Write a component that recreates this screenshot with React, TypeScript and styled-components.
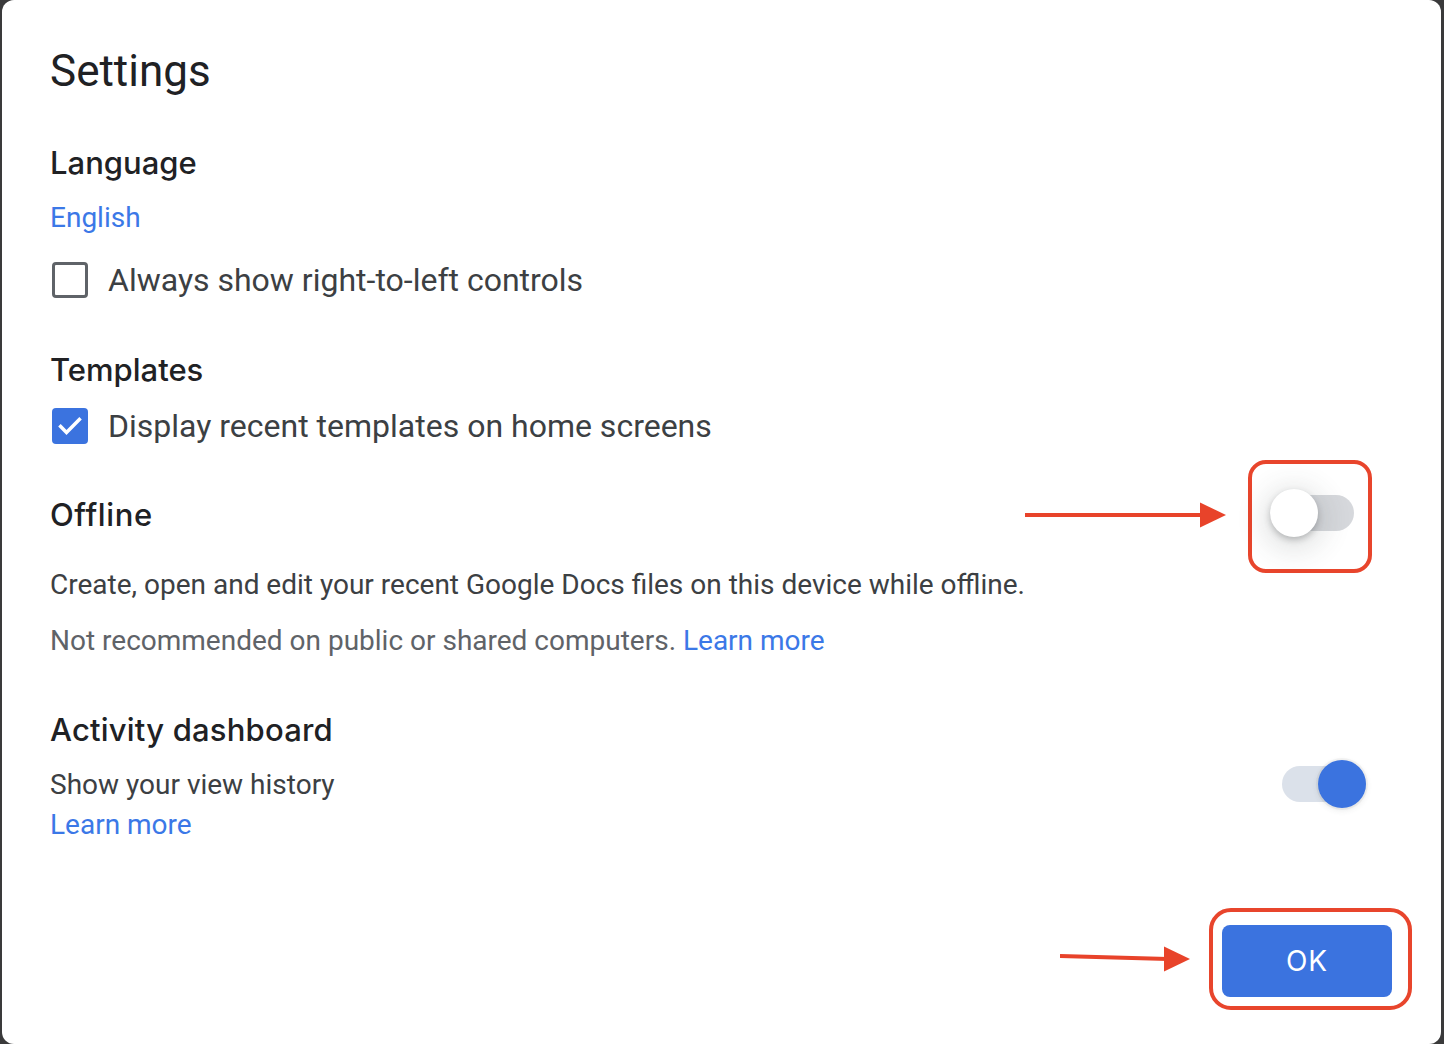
import React from "react";
import styled, { createGlobalStyle } from "styled-components";

const Global = createGlobalStyle`
  html, body { margin: 0; padding: 0; background: #3a3a3b; }
  body { font-family: Roboto, "Noto Sans", sans-serif; }
  * { box-sizing: border-box; }
`;

const Dialog = styled.div`
  margin: 0 3px 0 2px;
  height: 1044px;
  background: #ffffff;
  border-radius: 12px;
  padding: 45px 0 34px 48px;
  display: flex;
  flex-direction: column;
  overflow: hidden;
`;

const Title = styled.h1`
  margin: 0;
  font-family: Roboto, sans-serif;
  font-weight: 400;
  font-size: 44px;
  line-height: 52px;
  color: #202124;
`;

const Heading = styled.h2<{ $mt: number }>`
  margin: ${(p) => p.$mt}px 0 0;
  font-family: Inter, Roboto, sans-serif;
  font-weight: 500;
  font-size: 31px;
  line-height: 40px;
  color: #202124;
  letter-spacing: 0px;
`;

const Link = styled.a`
  color: #3b78e7;
  text-decoration: none;
  cursor: pointer;
`;

const LangLink = styled(Link)<{ $mt: number }>`
  display: block;
  margin-top: ${(p) => p.$mt}px;
  font-size: 28px;
  line-height: 36px;
`;

const CheckRow = styled.label<{ $mt: number }>`
  display: flex;
  align-items: center;
  gap: 20px;
  margin-top: ${(p) => p.$mt}px;
  height: 40px;
  padding-left: 2px;
  font-size: 32px;
  color: #3c4043;
  cursor: pointer;
`;

const Box = styled.span<{ $checked?: boolean }>`
  width: 36px;
  height: 36px;
  border-radius: 4px;
  flex: none;
  display: flex;
  align-items: center;
  justify-content: center;
  border: ${(p) => (p.$checked ? "none" : "3.5px solid #5f6368")};
  background: ${(p) => (p.$checked ? "#3b73df" : "transparent")};
`;

const HeaderRow = styled.div<{ $mt: number; $pr: number }>`
  display: flex;
  align-items: center;
  height: 50px;
  margin-top: ${(p) => p.$mt}px;
  padding-right: ${(p) => p.$pr}px;
`;

const HeaderText = styled.h2`
  flex: 1;
  margin: 0;
  font-family: Inter, Roboto, sans-serif;
  font-weight: 500;
  font-size: 31px;
  line-height: 40px;
  color: #202124;
  letter-spacing: 0.6px;
`;

const Highlight = styled.div<{ $pad: string; $radius: number; $my: string }>`
  border: 4px solid #e8452c;
  border-radius: ${(p) => p.$radius}px;
  padding: ${(p) => p.$pad};
  margin: ${(p) => p.$my};
  display: flex;
  background: transparent;
`;

const ArrowWrap = styled.div<{ $gap: number }>`
  display: flex;
  margin-right: ${(p) => p.$gap}px;
`;

const Para = styled.p<{ $mt: number; $muted?: boolean }>`
  margin: ${(p) => p.$mt}px 0 0;
  font-size: 28px;
  line-height: 36px;
  color: ${(p) => (p.$muted ? "#5f6368" : "#3c4043")};
`;

const ActivityHeading = styled(Heading)`
  letter-spacing: 0.2px;
`;

const ActivityGrid = styled.div`
  display: grid;
  grid-template-columns: 1fr auto;
  margin-top: 15px;
  padding-right: 75px;
  align-items: center;
`;

const GridText = styled.div`
  font-size: 28px;
  line-height: 40px;
  color: #3c4043;
`;

const GridLink = styled(Link)`
  font-size: 28px;
  line-height: 40px;
`;

const Track = styled.div<{ $on?: boolean }>`
  position: relative;
  width: 84px;
  height: 48px;
  flex: none;
  margin: ${(p) => (p.$on ? "-5px 0 -3px" : "0")};
  &::before {
    content: "";
    position: absolute;
    left: 0;
    right: 0;
    top: 6px;
    height: 36px;
    border-radius: 18px;
    background: ${(p) => (p.$on ? "#dbe1ea" : "#d6d8dc")};
  }
`;

const Knob = styled.div<{ $on?: boolean }>`
  position: absolute;
  top: 0;
  ${(p) => (p.$on ? "right: 0;" : "left: 0;")}
  width: 48px;
  height: 48px;
  border-radius: 50%;
  background: ${(p) => (p.$on ? "#3b73df" : "#ffffff")};
  box-shadow: ${(p) =>
    p.$on
      ? "0 0 0 2px rgba(60,64,67,0.06), 0 2px 6px rgba(60,64,67,0.12)"
      : "0 3px 6px rgba(60,64,67,0.3), 0 6px 26px 10px rgba(60,64,67,0.12)"};
`;

const Footer = styled.div`
  margin-top: auto;
  display: flex;
  justify-content: flex-end;
  align-items: center;
  padding-right: 29px;
`;

const OkButton = styled.button`
  width: 170px;
  height: 72px;
  border: none;
  border-radius: 8px;
  background: #3b73df;
  color: #ffffff;
  font-family: Inter, Roboto, sans-serif;
  font-weight: 400;
  font-size: 28px;
  letter-spacing: 0.8px;
  cursor: pointer;
`;

const Check = () => (
  <svg width="28" height="28" viewBox="0 0 24 24">
    <path d="M4 12.5l5 5L20 6.5" fill="none" stroke="#fff" strokeWidth="3" strokeLinecap="square" />
  </svg>
);

const Arrow = ({ w, slope = 0 }: { w: number; slope?: number }) => (
  <svg width={w} height={28} viewBox={`0 0 ${w} 28`}>
    <line x1="0" y1={14 - slope} x2={w - 22} y2={14} stroke="#e8432a" strokeWidth="4" />
    <polygon points={`${w - 26},1.5 ${w},14 ${w - 26},26.5`} fill="#e8432a" />
  </svg>
);

export default function App() {
  return (
    <>
      <Global />
      <Dialog>
        <Title>Settings</Title>

        <Heading $mt={46}>Language</Heading>
        <LangLink $mt={17}>English</LangLink>
        <CheckRow $mt={24}>
          <Box />
          Always show right-to-left controls
        </CheckRow>

        <Heading $mt={50}>Templates</Heading>
        <CheckRow $mt={16}>
          <Box $checked>
            <Check />
          </Box>
          Display recent templates on home screens
        </CheckRow>

        <HeaderRow $mt={44} $pr={69}>
          <HeaderText>Offline</HeaderText>
          <ArrowWrap $gap={22}>
            <Arrow w={201} />
          </ArrowWrap>
          <Highlight $pad="25px 14px 32px 18px" $radius={18} $my="-30px 0 -33px">
            <Track>
              <Knob />
            </Track>
          </Highlight>
        </HeaderRow>
        <Para $mt={27}>
          Create, open and edit your recent Google Docs files on this device while offline.
        </Para>
        <Para $mt={20} $muted>
          Not recommended on public or shared computers. <Link>Learn more</Link>
        </Para>

        <ActivityHeading $mt={51}>Activity dashboard</ActivityHeading>
        <ActivityGrid>
          <GridText>Show your view history</GridText>
          <Track $on>
            <Knob $on />
          </Track>
          <GridLink>Learn more</GridLink>
        </ActivityGrid>

        <Footer>
          <ArrowWrap $gap={19}>
            <Arrow w={130} slope={3} />
          </ArrowWrap>
          <Highlight $pad="13px 16px 9px 9px" $radius={22} $my="0">
            <OkButton>OK</OkButton>
          </Highlight>
        </Footer>
      </Dialog>
    </>
  );
}
